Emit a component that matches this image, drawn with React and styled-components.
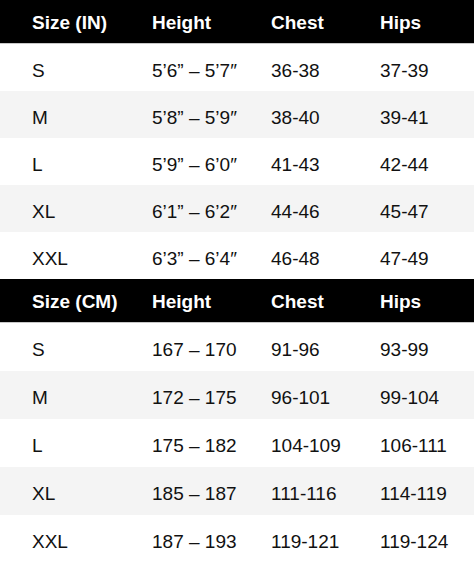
import React from 'react';
import styled, { createGlobalStyle } from 'styled-components';

const GlobalStyle = createGlobalStyle`
  html, body {
    margin: 0;
    padding: 0;
    background: #ffffff;
  }
  body {
    font-family: "Liberation Sans", Arial, sans-serif;
    color: #111111;
  }
`;

const Page = styled.div`
  width: 474px;
  display: flex;
  flex-direction: column;
`;

const Row = styled.div`
  display: grid;
  grid-template-columns: 120px 119px 109px 1fr;
  align-items: center;
  padding-left: 32px;
  padding-top: 6px;
  height: ${(p) => p.$height}px;
  box-sizing: border-box;
  background: ${(p) => (p.$shade ? '#f4f4f4' : '#ffffff')};
  font-size: 19px;
  color: #111111;
`;

const HeadRow = styled(Row)`
  padding-top: 2px;
  background: #000000;
  color: #ffffff;
  font-weight: bold;
  border-bottom: 1px solid #c8c8c8;
`;

const Cell = styled.div`
  white-space: nowrap;
`;

const inches = [
  ['S', '5’6” – 5’7″', '36-38', '37-39'],
  ['M', '5’8” – 5’9″', '38-40', '39-41'],
  ['L', '5’9” – 6’0″', '41-43', '42-44'],
  ['XL', '6’1” – 6’2″', '44-46', '45-47'],
  ['XXL', '6’3” – 6’4″', '46-48', '47-49'],
];

const cms = [
  ['S', '167 – 170', '91-96', '93-99'],
  ['M', '172 – 175', '96-101', '99-104'],
  ['L', '175 – 182', '104-109', '106-111'],
  ['XL', '185 – 187', '111-116', '114-119'],
  ['XXL', '187 – 193', '119-121', '119-124'],
];

const SizeTable = ({ unit, rows, rowHeight }) => (
  <>
    <HeadRow $height={44}>
      <Cell>Size ({unit})</Cell>
      <Cell>Height</Cell>
      <Cell>Chest</Cell>
      <Cell>Hips</Cell>
    </HeadRow>
    {rows.map((r, i) => (
      <Row key={r[0]} $height={rowHeight} $shade={i % 2 === 1}>
        {r.map((c, j) => (
          <Cell key={j}>{c}</Cell>
        ))}
      </Row>
    ))}
  </>
);

export default function App() {
  return (
    <Page>
      <GlobalStyle />
      <SizeTable unit="IN" rows={inches} rowHeight={47} />
      <SizeTable unit="CM" rows={cms} rowHeight={48} />
    </Page>
  );
}
